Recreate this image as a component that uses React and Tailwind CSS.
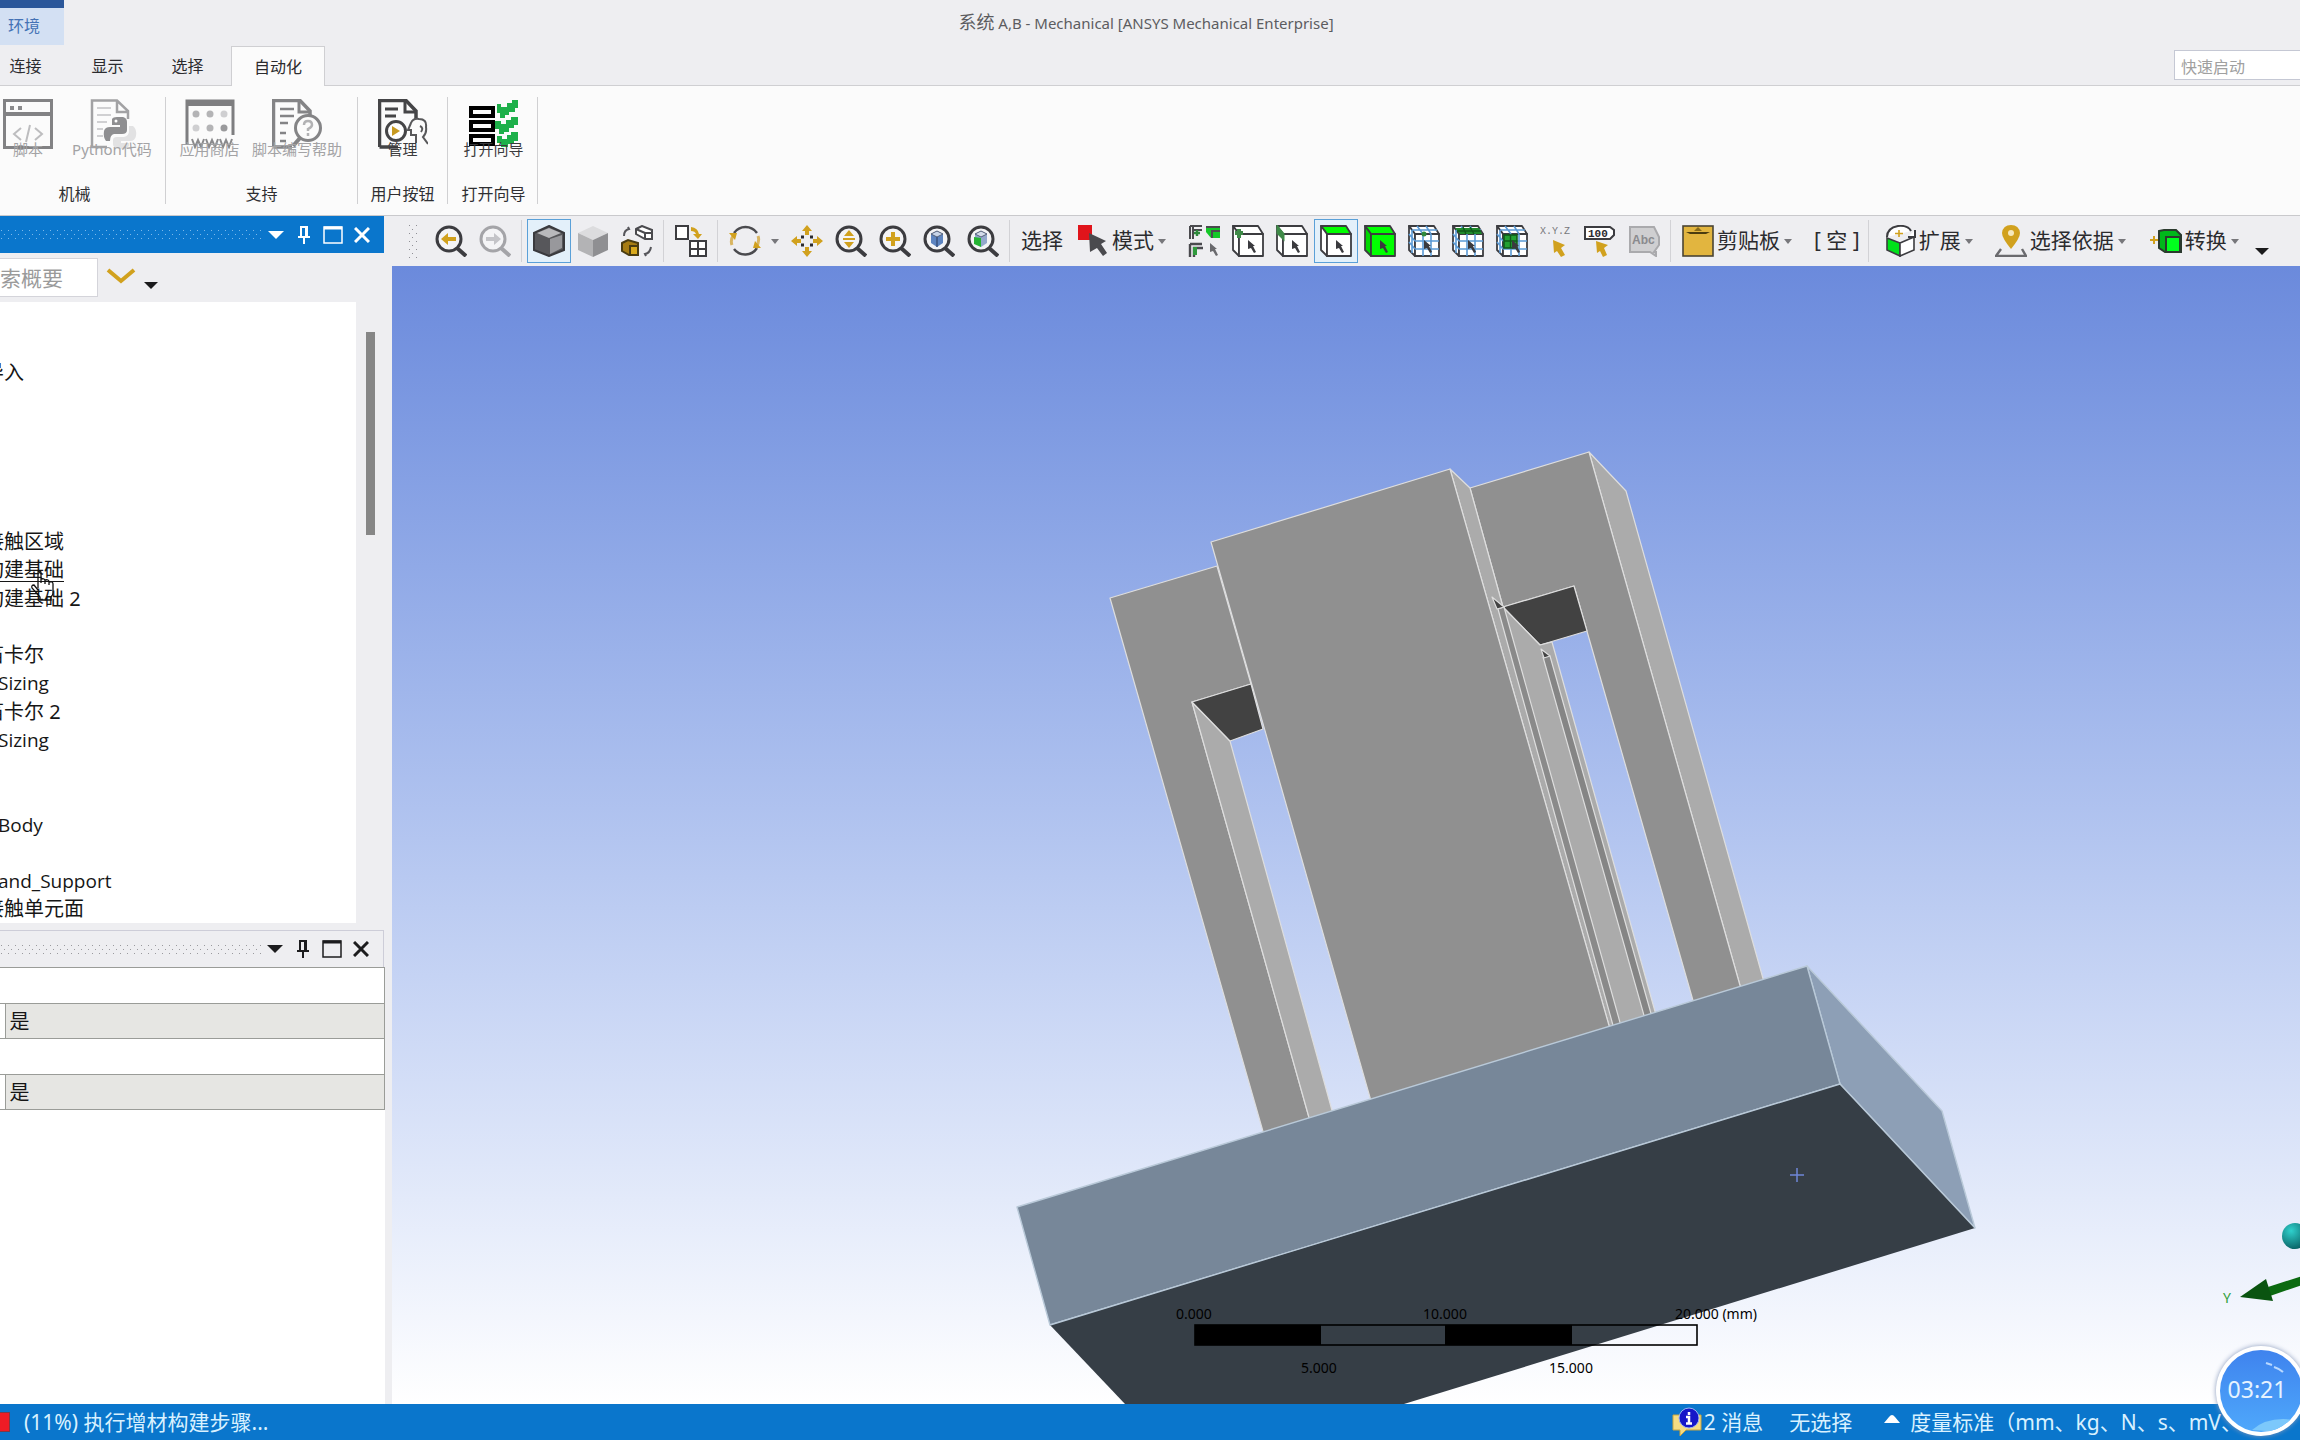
const treeRows = [
  "", "", "导入", "", "", "", "", "", "接触区域", "构建基础", "构建基础 2", "",
  "笛卡尔", "Sizing", "笛卡尔 2", "Sizing", "", "", "Body", "", "and_Support", "接触单元面",
];

const isLatin = (text) => /^[A-Za-z]/.test(text);

/* ---------- small shared pieces ---------- */

function Caret({ className = "" }) {
  return (
    <svg viewBox="0 0 8 5" className={`w-2 h-[5px] shrink-0 ${className}`} aria-hidden="true">
      <path d="M0 0H8L4 5Z" fill="#77777b" />
    </svg>
  );
}

function Separator() {
  return <div className="w-0.5 h-[42px] mx-1 shrink-0 border-l border-[#d2d2d6]" />;
}

function Dots({ id, color, className }) {
  return (
    <svg className={className} aria-hidden="true">
      <defs>
        <pattern id={id} width="7" height="8" patternUnits="userSpaceOnUse">
          <rect x="1" y="0" width="1" height="1" fill={color} />
          <rect x="4" y="4" width="1" height="1" fill={color} />
        </pattern>
      </defs>
      <rect width="100%" height="100%" fill={`url(#${id})`} />
    </svg>
  );
}

function ToolButton({ label, active, children }) {
  return (
    <button
      aria-label={label}
      className={`w-11 h-11 shrink-0 flex items-center justify-center border ${
        active ? "border-[#5aa0d8] bg-[#e3f0fa]" : "border-transparent"
      }`}
    >
      <svg viewBox="0 0 32 32" className="w-8 h-8" fill="none">
        {children}
      </svg>
    </button>
  );
}

function PanelButtons({ color }) {
  return (
    <div className="flex items-center pr-2">
      <button aria-label="菜单" className="w-7 h-7 flex items-center justify-center">
        <svg viewBox="0 0 16 8" className="w-4 h-2"><path d="M0 0H16L8 8Z" fill={color} /></svg>
      </button>
      <button aria-label="固定" className="w-7 h-7 flex items-center justify-center">
        <svg viewBox="0 0 16 20" className="w-4 h-5" fill="none" stroke={color} strokeWidth="2">
          <path d="M5 12V2H11V12M2 12H14M8 12V19" />
          <path d="M10 2V12" />
        </svg>
      </button>
      <button aria-label="最大化" className="w-[30px] h-7 flex items-center justify-center">
        <svg viewBox="0 0 20 18" className="w-5 h-[18px]" fill="none" stroke={color}>
          <rect x="1" y="1" width="18" height="16" strokeWidth="1.5" />
          <path d="M1 2H19" strokeWidth="3" />
        </svg>
      </button>
      <button aria-label="关闭" className="w-7 h-7 flex items-center justify-center">
        <svg viewBox="0 0 16 16" className="w-4 h-4" stroke={color} strokeWidth="3">
          <path d="M1 1L15 15M15 1L1 15" />
        </svg>
      </button>
    </div>
  );
}

/* ---------- toolbar icons ---------- */

function Magnifier({ color = "#3c3c40", children }) {
  return (
    <>
      <circle cx="14" cy="14" r="12" fill="#f4f4f6" stroke={color} strokeWidth="3" />
      <path d="M22 23L31 31" stroke={color} strokeWidth="4" />
      {children}
    </>
  );
}

function Cursor({ x = 14, y = 14, fill = "#3a3a3e" }) {
  return (
    <path
      transform={`translate(${x} ${y})`}
      d="M0 0L7 6H5L8 12L6 13L3 8L0 9Z"
      fill={fill}
    />
  );
}

function SelectBox({ top = "#fff", side = "#fff", front = "#fff", stroke = "#3c3c40", children }) {
  return (
    <>
      <g stroke={stroke} strokeWidth="1.8" strokeLinejoin="round">
        <path d="M1 1H26L31 9H7Z" fill={top} />
        <path d="M1 1L7 9V31L1 25Z" fill={side} />
        <rect x="7" y="9" width="24" height="22" fill={front} />
      </g>
      {children}
      <Cursor x={16} y={15} />
    </>
  );
}

function MeshLines() {
  return (
    <path
      d="M15 9V31M23 9V31M7 16H31M7 24H31M4 5H29M9 1L15 9M18 1L23 9M4 5V28M1 9L7 16M1 17L7 24"
      stroke="#5b9ad5"
      strokeWidth="1.6"
    />
  );
}

/* ---------- title, tabs, ribbon ---------- */

function TitleBar() {
  return (
    <header className="relative h-[46px] flex items-center justify-center pr-2">
      <div className="absolute left-0 top-0 w-16 h-[45px] border-t-8 border-[#2b579a] bg-[#d3e0f3] text-[#4472b5] text-base leading-9 pl-2">
        环境
      </div>
      <h1 className="text-[#5c5c60] text-[15px]">
        <span className="text-lg leading-none">系统</span> A,B - Mechanical [ANSYS Mechanical Enterprise]
      </h1>
    </header>
  );
}

function TabRow() {
  return (
    <nav className="h-10 flex items-stretch border-b border-[#cfcfd2] text-base text-[#2b2b2e]">
      <button className="w-[67px] pr-4 text-center">连接</button>
      <button className="w-[81px]">显示</button>
      <button className="w-[83px] pr-1">选择</button>
      <button className="w-[94px] -mb-px bg-[#fbfbfb] border border-b-0 border-[#cfcfd2]">自动化</button>
      <input
        aria-label="快速启动"
        placeholder="快速启动"
        className="ml-auto -mr-1 mt-1 w-[130px] h-[30px] px-1.5 pt-1 bg-white border border-[#c5c8d4] text-base placeholder:text-[#a0a0a0]"
      />
    </nav>
  );
}

function RibbonButton({ label, wide, disabled, children }) {
  return (
    <button
      disabled={disabled}
      className={`flex flex-col items-center ${wide} ${disabled ? "text-[#a3a3a5]" : "text-[#3a3a3c]"}`}
    >
      <svg viewBox="0 0 50 50" className="w-[50px] h-[50px]" fill="none">
        {children}
      </svg>
      <span className="relative -mt-2 text-[15px] leading-4 whitespace-nowrap">{label}</span>
    </button>
  );
}

function RibbonGroup({ title, className, rowClass = "justify-center", children }) {
  return (
    <section className={`my-[11px] border-r border-[#d0d0d2] flex flex-col justify-between ${className}`}>
      <div className={`flex pt-0.5 ${rowClass}`}>{children}</div>
      <h2 className="text-center text-base leading-5 text-[#2f2f32]">{title}</h2>
    </section>
  );
}

function PageShape({ color }) {
  return (
    <>
      <path d="M1.500 48V1.500H28L38 12V20M1.500 48H20" stroke={color} strokeWidth="3.5" />
      <path d="M27 2V13H38" stroke={color} strokeWidth="3" />
    </>
  );
}

function Ribbon() {
  return (
    <div className="h-[130px] flex bg-[#fbfbfb] border-b border-[#c9c9cc]">
      <RibbonGroup title="机械" className="-ml-4 w-[182px]" rowClass="pl-0.5">
        <RibbonButton label="脚本" wide="w-[84px]" disabled>
          <rect x="1.500" y="1.500" width="47" height="47" stroke="#828284" strokeWidth="3" />
          <path d="M1 15H49" stroke="#828284" strokeWidth="4" />
          <path d="M7 9H11M15 9H19" stroke="#8a8a8c" strokeWidth="4" />
          <path d="M18 29L11 35L18 41M32 29L39 35L32 41M27 26L23 43" stroke="#bdbdbf" strokeWidth="2" />
        </RibbonButton>
        <RibbonButton label="Python代码" wide="w-[84px]" disabled>
          <path d="M5 48V1.500H30L41 12V20M30 2V13H41M5 48H20" stroke="#a2a2a4" strokeWidth="2.500" />
          <path d="M10 9H24M10 16H24M10 23H20M10 30H16M10 37H16" stroke="#d0d0d2" strokeWidth="2" />
          <path d="M25 20Q26 18 30 18H36Q40 19 40 23V31Q40 35 35 35H27Q23 36 23 42H19Q16 38 17 32Q18 28 23 28H33V26H25Z" fill="#8f8f91" />
          <path d="M42 27H46Q50 30 49 37Q48 42 43 42H34V44H42V47Q40 50 33 50Q26 50 26 45V41Q26 38 30 38H37Q42 37 42 32Z" fill="#e2e2e3" />
          <circle cx="29" cy="22" r="1.500" fill="#fff" />
        </RibbonButton>
      </RibbonGroup>

      <RibbonGroup title="支持" className="w-[192px]" rowClass="justify-center pr-4">
        <RibbonButton label="应用商店" wide="w-[88px]" disabled>
          <path d="M2 46V2H48V36" stroke="#7e7e80" strokeWidth="3" />
          <path d="M1 4H49" stroke="#7e7e80" strokeWidth="6" />
          <g fill="#b4b4b6">
            <circle cx="11" cy="15" r="3.500" /><circle cx="25" cy="15" r="3.500" /><circle cx="39" cy="15" r="3.500" fill="#cfcfd1" />
            <circle cx="11" cy="29" r="3.500" fill="#cfcfd1" /><circle cx="25" cy="29" r="3.500" /><circle cx="39" cy="29" r="3.500" fill="#9a9a9c" />
          </g>
          <path d="M7 40L10 48L13 41L16 48L19 40M21 40L24 48L27 41L30 48L33 40M35 40L38 48L41 41L44 48L47 40" stroke="#8a8a8c" strokeWidth="2" />
        </RibbonButton>
        <RibbonButton label="脚本编写帮助" wide="w-[88px]" disabled>
          <PageShape color="#848486" />
          <path d="M8 10H22M8 17H22M8 24H16M8 34H14M8 42H14" stroke="#848486" strokeWidth="2.500" />
          <circle cx="36" cy="29" r="12.500" fill="#fbfbfb" stroke="#848486" strokeWidth="3" />
          <path d="M32 26Q32 22 36 22Q40 22 40 26Q40 28 36 30V32M36 34V37" stroke="#b2b2b4" strokeWidth="2.500" />
          <path d="M28 39L21 47" stroke="#848486" strokeWidth="4" />
        </RibbonButton>
      </RibbonGroup>

      <RibbonGroup title="用户按钮" className="w-[90px]">
        <RibbonButton label="管理" wide="w-20">
          <PageShape color="#454547" />
          <path d="M7 10H20M7 17H18" stroke="#454547" strokeWidth="3" />
          <circle cx="18" cy="32" r="9.500" fill="#fff" stroke="#454547" strokeWidth="3" />
          <path d="M14 27L22 32L14 37Z" fill="#c89a20" />
          <path d="M33 24Q35 19 41 20Q49 20 48 28Q49 34 45 38L50 45M33 24L30 31H33V36H38V44" stroke="#58585a" strokeWidth="2" />
          <path d="M42 27Q46 29 43 33" stroke="#58585a" strokeWidth="2" />
        </RibbonButton>
      </RibbonGroup>

      <RibbonGroup title="打开向导" className="w-[90px] pl-0.5">
        <RibbonButton label="打开向导" wide="w-20">
          <g stroke="#000" strokeWidth="4">
            <rect x="2" y="9" width="22" height="8" />
            <rect x="2" y="23" width="22" height="8" />
            <rect x="2" y="37" width="22" height="8" />
          </g>
          <g fill="#1eb04a">
            <path d="M28 5H32V8H38V4H43V1H49V9H46V13H40V16H36V19H31V14H28Z" />
            <path d="M26 22H32V25H37V21H42V18H49V26H45V29H40V33H35V35H30V30H26Z" />
            <path d="M28 37H33V40H38V36H42V33H49V42H45V45H39V48H32V44H28Z" />
          </g>
        </RibbonButton>
      </RibbonGroup>
    </div>
  );
}

/* ---------- left column ---------- */

function OutlinePanel() {
  return (
    <>
      <div className="h-[37px] mr-2 bg-[#0a76cc] flex items-center shrink-0">
        <Dots id="dots-outline" color="#7db9ea" className="flex-1 h-[9px]" />
        <PanelButtons color="#ffffff" />
      </div>
      <div className="h-[49px] flex items-center shrink-0">
        <input
          aria-label="搜索概要"
          placeholder="搜索概要"
          className="w-[120px] -ml-[22px] h-[39px] bg-white border border-[#d4d4da] text-[21px] placeholder:text-[#9a9a9a]"
        />
        <button aria-label="展开" className="ml-2 mb-1">
          <svg viewBox="0 0 30 16" className="w-[30px] h-4" fill="none">
            <path d="M2 2L15 13L28 2" stroke="#d1a11e" strokeWidth="4" />
          </svg>
        </button>
        <button aria-label="更多" className="ml-2 mt-4">
          <svg viewBox="0 0 14 7" className="w-3.5 h-[7px]"><path d="M0 0H14L7 7Z" fill="#1a1a1c" /></svg>
        </button>
      </div>
      <div className="flex-[622] min-h-0 flex overflow-hidden relative">
        <ul className="flex-1 bg-white flex flex-col text-[#161616] leading-7 overflow-hidden">
          {treeRows.map((row, i) => (
            <li key={i} className="flex-1 min-h-0 flex items-center whitespace-nowrap">
              <span
                className={`${
                  isLatin(row) ? "-ml-0.5 text-[19px] font-['Open_Sans',sans-serif]" : "-ml-4 text-xl"
                } ${i === 9 ? "underline underline-offset-4 decoration-1" : ""}`}
              >
                {row}
              </span>
            </li>
          ))}
        </ul>
        <div className="w-9 pl-2.5 flex flex-col">
          <div className="flex-[30]" />
          <div className="flex-[203] w-[9px] bg-[#868686]" />
          <div className="flex-[389]" />
        </div>
        {/* hand pointer over the tree */}
        <svg viewBox="0 0 26 32" className="absolute left-[30px] top-[268px] w-[26px] h-8" fill="none" stroke="#111" strokeWidth="1.3">
          <path d="M8 18V3Q8 1 10 1Q11 1 11 3V13V9Q15 8 15 11V14V10Q19 9 19 12V15V12Q23 11 23 14V23Q23 25 21 27V30H10V27L2 18Q1 15 4 15L8 20" />
        </svg>
      </div>
    </>
  );
}

function DetailsPanel() {
  const cells = ["", "是", "", "是"];
  return (
    <>
      <div className="h-[37px] mt-[7px] mr-2 border border-l-0 border-b-0 border-[#cdcdd8] flex items-center shrink-0">
        <Dots id="dots-details" color="#9a9a9e" className="flex-1 h-[9px]" />
        <PanelButtons color="#1c1c1e" />
      </div>
      <div className="flex-[437] min-h-0 mr-[7px] bg-white">
        <table className="w-full border-collapse text-xl leading-6 text-[#161616]">
          <tbody>
            {cells.map((value, i) =>
              value ? (
                <tr key={i} className="h-[35px] border border-l-0 border-[#9a9c98]">
                  <td className="w-[5px] p-0 border-r border-[#9a9c98]" />
                  <td className="p-0 pl-1 pt-0.5 bg-[#e6e6e3]">{value}</td>
                </tr>
              ) : (
                <tr key={i} className="h-9 border border-l-0 border-[#9a9c98]">
                  <td colSpan={2} className="p-0" />
                </tr>
              )
            )}
          </tbody>
        </table>
      </div>
    </>
  );
}

/* ---------- graphics toolbar ---------- */

function TextButton({ label, children, caret = true, className = "" }) {
  return (
    <button className={`flex items-center h-11 shrink-0 text-[21px] text-[#2b2b2e] whitespace-nowrap ${className}`}>
      {children && (
        <svg viewBox="0 0 32 32" className="w-8 h-8 mr-[3px]" fill="none">
          {children}
        </svg>
      )}
      {label}
      {caret && <Caret className="ml-1" />}
    </button>
  );
}

function GraphicsToolbar() {
  return (
    <div className="h-[50px] flex items-center pl-4 bg-[#eeeef1] shrink-0 overflow-hidden">
      <Dots id="dots-grip" color="#8f8f95" className="w-[9px] h-[33px] mr-3 shrink-0" />

      <ToolButton label="上一视图">
        <Magnifier><path d="M6 14L13 8V12H21V16H13V20Z" fill="#d1a11e" /></Magnifier>
      </ToolButton>
      <ToolButton label="下一视图">
        <Magnifier color="#a4a4a8"><path d="M22 14L15 8V12H7V16H15V20Z" fill="#c4c4c8" /></Magnifier>
      </ToolButton>
      <Separator />

      <ToolButton label="着色外表面和边" active>
        <path d="M16 1L31 8V25L16 31L1 25V8Z" fill="#57575b" stroke="#3a3a3e" strokeWidth="2" />
        <path d="M16 3L28 8L16 13L4 8Z" fill="#b9b9bc" />
        <path d="M17 14L29 10V23L17 29Z" fill="#98989c" />
      </ToolButton>
      <ToolButton label="着色外表面">
        <path d="M16 1L31 8L16 15L1 8Z" fill="#dcdcde" />
        <path d="M1 8L16 15V32L1 25Z" fill="#b3b3b5" />
        <path d="M31 8L16 15V32L31 25Z" fill="#8f8f92" />
      </ToolButton>
      <ToolButton label="显示切换">
        <path d="M15 4L21 1L31 5V14H24L15 9Z" fill="#fff" stroke="#4a4a4e" strokeWidth="2" />
        <path d="M15 4L24 8V14M24 8H31" stroke="#4a4a4e" strokeWidth="2" />
        <path d="M1 18L7 15L17 18V30H8L1 26Z" fill="#a67c12" stroke="#4a3c10" strokeWidth="2" />
        <rect x="9" y="21" width="8" height="9" fill="#d9a91c" stroke="#4a3c10" strokeWidth="2" />
        <path d="M3 11Q3 5 8 4L7 2M30 22Q29 28 24 29L25 31" stroke="#55555a" strokeWidth="2" />
      </ToolButton>
      <Separator />

      <ToolButton label="视口">
        <rect x="1" y="1" width="12" height="13" fill="#fff" stroke="#3c3c40" strokeWidth="2" />
        <rect x="15" y="16" width="16" height="15" fill="#fff" stroke="#3c3c40" strokeWidth="2" />
        <path d="M23 16V31M15 24H31" stroke="#3c3c40" strokeWidth="2" />
        <path d="M16 2Q23 3 24 9H27L23 14L18 9H21Q20 6 16 6Z" fill="#d1a11e" />
      </ToolButton>
      <Separator />

      <ToolButton label="旋转">
        <path d="M5 8A14 14 0 0 1 28 8M28 23A14 14 0 0 1 5 24" stroke="#4a4a4e" strokeWidth="2.400" />
        <path d="M3 20Q1 15 5 9M29 11Q31 16 27 23" stroke="#d9b561" strokeWidth="3" />
        <path d="M0 8H8L6 15Z" fill="#d1a11e" />
        <path d="M32 23H24L26 16Z" fill="#d1a11e" />
      </ToolButton>
      <Caret className="ml-1 mr-1.5" />
      <ToolButton label="平移">
        <g fill="#d1a11e">
          <path d="M16 0L21 6H18V10H14V6H11Z" />
          <path d="M16 32L21 26H18V22H14V26H11Z" />
          <path d="M0 16L6 11V14H10V18H6V21Z" />
          <path d="M32 16L26 11V14H22V18H26V21Z" />
        </g>
        <path d="M10 12H13M19 12H22M10 20H13M19 20H22" stroke="#2a2a2e" strokeWidth="3" />
      </ToolButton>
      <ToolButton label="缩放">
        <Magnifier>
          <path d="M14 5L19 11H9ZM14 23L19 17H9Z" fill="#d1a11e" />
          <path d="M8 14H20" stroke="#d1a11e" strokeWidth="2" />
        </Magnifier>
      </ToolButton>
      <ToolButton label="框选缩放">
        <Magnifier><path d="M14 7V21M7 14H21" stroke="#d1a11e" strokeWidth="4" /></Magnifier>
      </ToolButton>
      <ToolButton label="缩放到适合">
        <Magnifier>
          <path d="M14 6L20 9V18L14 22L8 18V9Z" fill="#5d84c0" />
          <path d="M14 6L20 9L14 12L8 9Z" fill="#c8d4e8" stroke="#55617a" />
          <path d="M14 12V22" stroke="#39507c" strokeWidth="1.500" />
        </Magnifier>
      </ToolButton>
      <ToolButton label="缩放到选择">
        <Magnifier>
          <path d="M14 6L20 9V18L14 22L8 18V9Z" fill="#93a8cc" />
          <path d="M7 12L14 13V22L7 19Z" fill="#26b434" />
          <path d="M14 6L20 9L14 12L8 9Z" fill="#d4dcea" stroke="#55617a" />
        </Magnifier>
      </ToolButton>
      <Separator />

      <TextButton label="选择" caret={false} className="ml-1.5 mr-3.5" />
      <TextButton label="模式" className="mr-4">
        <rect x="1" y="0" width="14" height="15" fill="#e0141b" />
        <path d="M12 8L29 16L24 19L30 28L26 31L20 23L13 27Z" fill="#4a4a4e" />
      </TextButton>

      <ToolButton label="选择模式">
        <path d="M2 1H14M5 1V14M2 1V14M14 5H6" stroke="#4a4a4e" strokeWidth="2" />
        <path d="M9 5V11M6 8H12" stroke="#2f8a3c" strokeWidth="2.400" />
        <path d="M18 2H32V13H23L18 7Z" fill="#14c828" />
        <path d="M18 2H32M24 13V6H32" stroke="#4a4a4e" strokeWidth="2" />
        <path d="M2 19H14M2 19V32M6 32V23H15" stroke="#4a4a4e" strokeWidth="2.400" />
        <path d="M5 22L9 22V30H5Z" fill="#2f9a3c" />
        <Cursor x={22} y={18} fill="#6a6a6e" />
      </ToolButton>
      <ToolButton label="顶点">
        <SelectBox><path d="M7 4V13M3 8H11" stroke="#3f8a48" strokeWidth="4" /></SelectBox>
      </ToolButton>
      <ToolButton label="边">
        <SelectBox><path d="M2 3L7 9V13L2 8Z" fill="#1f9a35" stroke="#3f8a48" strokeWidth="3" /></SelectBox>
      </ToolButton>
      <ToolButton label="面" active>
        <SelectBox top="#00ff00" />
      </ToolButton>
      <ToolButton label="体">
        <SelectBox top="#00ff00" side="#00d800" front="#00ff00" />
      </ToolButton>
      <ToolButton label="节点">
        <SelectBox><MeshLines /><circle cx="16" cy="9" r="2.500" fill="#2f8a3c" /></SelectBox>
      </ToolButton>
      <ToolButton label="单元面">
        <SelectBox>
          <MeshLines />
          <path d="M3 3H27L30 9H8Z" fill="#1f8a2c" />
          <path d="M11 2L14 9M18 2L22 9M5 6H29" stroke="#0f5a1a" strokeWidth="1.400" />
        </SelectBox>
      </ToolButton>
      <ToolButton label="单元">
        <SelectBox>
          <MeshLines />
          <rect x="8" y="10" width="13" height="13" fill="#22a032" stroke="#0f5a1a" strokeWidth="1.600" />
          <path d="M14.500 10V23M8 16H21" stroke="#0f5a1a" strokeWidth="1.400" />
        </SelectBox>
      </ToolButton>
      <ToolButton label="坐标">
        <text x="0" y="9" fontSize="10" fill="#77777b" fontFamily="Liberation Mono">X.Y.Z</text>
        <path d="M13 15L25 20L21 23L25 30L21 32L17 26L14 28Z" fill="#d1a11e" />
      </ToolButton>
      <ToolButton label="探针">
        <path d="M1 2H26L30 5V10L26 14H1Z" fill="#fff" stroke="#3c3c40" strokeWidth="2" />
        <text x="4" y="12" fontSize="11" fontWeight="bold" fill="#2a2a2e" fontFamily="Liberation Mono">100</text>
        <path d="M12 16L24 20L20 23L23 30L19 32L16 26L13 28Z" fill="#d1a11e" />
      </ToolButton>
      <ToolButton label="标注">
        <path d="M2 2H26L31 12V20L26 27H28V31L22 27H2Z" fill="#cfcfd1" stroke="#aaaaad" strokeWidth="2" />
        <text x="4" y="19" fontSize="12" fontWeight="bold" fill="#8a8a8e" fontFamily="Liberation Sans">Abc</text>
      </ToolButton>
      <Separator />

      <TextButton label="剪贴板" className="ml-1.5 mr-[22px]">
        <rect x="1" y="1" width="30" height="30" fill="#e2b53f" stroke="#4a4434" strokeWidth="1.600" />
        <path d="M4 7H28L24 9H8Z" fill="#4a3c10" />
        <path d="M12 6L16 2L20 6Z" fill="#8a6c1a" />
      </TextButton>
      <TextButton label="[ 空 ]" caret={false} className="mr-1" />
      <Separator />

      <TextButton label="扩展" className="ml-2.5 mr-[22px]">
        <path d="M3 13L16 18V31L3 25Z" fill="#00e21a" stroke="#3c3c40" strokeWidth="1.600" />
        <path d="M16 18L30 12V25L16 31Z" fill="#fff" stroke="#3c3c40" strokeWidth="1.600" />
        <path d="M3 12Q3 3 14 1Q24 0 27 6M31 5V12H24" fill="#fff" stroke="#3c3c40" strokeWidth="2" />
        <path d="M15 5V12M11 8.500H19" stroke="#d1a11e" strokeWidth="1.600" />
      </TextButton>
      <TextButton label="选择依据" className="mr-6">
        <path d="M16 24Q7 13 7 8Q8 0 16 0Q24 0 25 8Q25 13 16 24Z" fill="#d1a11e" />
        <circle cx="16" cy="8" r="3" fill="#f6e8bc" />
        <path d="M6 24L1 31H31L27 24" stroke="#6a6a6e" strokeWidth="2.400" />
      </TextButton>
      <TextButton label="转换">
        <path d="M0 15H8M4 11V19" stroke="#d1a11e" strokeWidth="2" />
        <path d="M9 6L14 5H26L31 10V27H15L9 23Z" fill="#00b81a" stroke="#2b3a2e" strokeWidth="2" />
        <rect x="16" y="12" width="14" height="15" fill="#00ff1e" stroke="#2b3a2e" strokeWidth="2" />
      </TextButton>
      <button aria-label="更多工具" className="ml-4 mt-5">
        <svg viewBox="0 0 14 7" className="w-3.5 h-[7px]"><path d="M0 0H14L7 7Z" fill="#1a1a1c" /></svg>
      </button>
    </div>
  );
}

/* ---------- 3D viewport ---------- */

function Viewport() {
  return (
    <div className="flex-1 min-h-0 bg-linear-to-b from-[#6b8adc] to-white">
      <svg viewBox="392 266 1908 1138" preserveAspectRatio="xMidYMid slice" className="block w-full h-full">
        <defs>
          <radialGradient id="ball" cx="0.350" cy="0.300" r="0.800">
            <stop offset="0" stopColor="#2fd0cc" />
            <stop offset="1" stopColor="#07595c" />
          </radialGradient>
        </defs>

        {/* uprights, their feet run a little behind the plate */}
        <g stroke="#dedede" strokeWidth="1.200" strokeLinejoin="round">
          <path d="M1110 598L1217 566L1251 684L1192 702L1310 1121L1264 1135Z" fill="#909090" />
          <path d="M1192 702L1230 741L1333 1114L1310 1121Z" fill="#ababab" />
          <path d="M1192 702L1251 684L1263 729L1230 741Z" fill="#424242" />
          <path d="M1589 452L1626 491L1764 982L1741 989Z" fill="#ababab" />
          <path d="M1470 488L1589 452L1741 989L1694 1004L1574 586L1503 607Z" fill="#909090" />
          <path d="M1503 607L1574 586L1587 631L1540 645Z" fill="#424242" />
          <path d="M1450 469L1470 488L1503 607L1540 645L1552 642L1656 1015L1610 1029Z" fill="#ababab" />
          <path d="M1498 609L1504 607L1621 1026L1614 1029Z" fill="#8a8a8a" />
          <path d="M1543 657L1550 656L1652 1017L1645 1019Z" fill="#858585" />
          <path d="M1492 597L1504 607L1497 609Z" fill="#424242" />
          <path d="M1541 649L1550 656L1544 658Z" fill="#424242" />
          <path d="M1211 542L1450 469L1610 1029L1371 1101Z" fill="#909090" />
        </g>

        {/* base plate */}
        <g stroke="#b9c9d8" strokeWidth="1.400" strokeLinejoin="round">
          <path d="M1807 966L1942 1111L1975 1228L1840 1084Z" fill="#8d9fb6" />
          <path d="M1017 1207L1807 966L1840 1084L1050 1325Z" fill="#778799" />
        </g>
        <path d="M1050 1325L1840 1084L1975 1228L1404 1404H1125Z" fill="#363e46" />
        <path d="M1050 1325L1840 1084L1975 1228" fill="none" stroke="#b9c9d8" strokeWidth="1.400" />
        <path d="M1790 1175H1804M1797 1168V1182" stroke="#6f86d8" strokeWidth="1.500" />

        {/* scale ruler */}
        <rect x="1195" y="1325" width="502" height="20" fill="none" stroke="#000" strokeWidth="1.600" />
        <path d="M1195 1325H1321V1345H1195ZM1445 1325H1572V1345H1445Z" fill="#000" />
        <g fontSize="14" fill="#000" textAnchor="middle">
          <text x="1194" y="1319">0.000</text>
          <text x="1445" y="1319">10.000</text>
          <text x="1716" y="1319">20.000 (mm)</text>
          <text x="1319" y="1373">5.000</text>
          <text x="1571" y="1373">15.000</text>
        </g>

        {/* axis triad */}
        <circle cx="2295" cy="1236" r="13" fill="url(#ball)" />
        <path d="M2268 1287L2302 1276V1285L2270 1296Z" fill="#0b6a10" />
        <path d="M2240 1297L2266 1279L2273 1301Z" fill="#0a5410" />
        <text x="2223" y="1303" fontSize="14" fill="#2fa03a">Y</text>
      </svg>
    </div>
  );
}

/* ---------- status bar ---------- */

function StatusBar() {
  return (
    <footer className="h-9 shrink-0 flex items-center bg-[#0a76cc] text-[21px] leading-8 text-[#d9f1ff] whitespace-nowrap">
      <button aria-label="停止" className="w-2.5 h-5 bg-[#ee1c25] border border-l-0 border-[#7a3a4a]" />
      <span className="ml-3.5">(11%) 执行增材构建步骤...</span>
      <button className="ml-auto flex items-center">
        <svg viewBox="0 0 30 30" className="w-[30px] h-[30px] mr-0.5" fill="none">
          <path d="M1 8H29V23H14L8 29V23H1Z" fill="#f6dc83" stroke="#c9a53e" />
          <circle cx="17" cy="11" r="10" fill="#1616c8" stroke="#9ab4f0" />
          <path d="M17 5V8M14 10H17V16M14 16.500H20" stroke="#fff" strokeWidth="2.500" />
        </svg>
        2 消息
      </button>
      <span className="ml-[26px]">无选择</span>
      <button className="ml-8 flex items-center mr-1">
        <svg viewBox="0 0 16 8" className="w-4 h-2 mr-2.5 mb-1.5"><path d="M0 8L5 2Q8 -2 11 2L16 8Z" fill="#fff" /></svg>
        度量标准（mm、kg、N、s、mV、mA）
      </button>
    </footer>
  );
}

function RecordTimer() {
  return (
    <div className="absolute -right-1.5 bottom-1 w-[90px] h-[90px] rounded-full bg-white shadow-[0_0_5px_#8899bb] p-1">
      <div className="relative w-full h-full rounded-full overflow-hidden bg-linear-to-b from-[#3f83ee] to-[#4fa8fb] flex items-center justify-center">
        <svg viewBox="0 0 82 82" className="absolute inset-0 w-full h-full" fill="none">
          <path d="M32 80Q48 66 74 70L60 82Z" fill="#7cc8fb" />
          <path d="M46 13L52 15M54 17Q60 19 63 22" stroke="#b8d8ff" strokeWidth="2" />
        </svg>
        <span className="relative text-[23px] leading-none text-[#e6f3ff] pr-2 pb-1">03:21</span>
      </div>
    </div>
  );
}

export default function App() {
  return (
    <div className="relative h-screen flex flex-col overflow-hidden bg-[#eeeef1] font-['Noto_Sans','Noto_Sans_CJK_SC',sans-serif]">
      <TitleBar />
      <TabRow />
      <Ribbon />
      <main className="flex-1 min-h-0 flex">
        <aside className="w-[392px] shrink-0 flex flex-col">
          <OutlinePanel />
          <DetailsPanel />
        </aside>
        <div className="flex-1 min-w-0 flex flex-col">
          <GraphicsToolbar />
          <Viewport />
        </div>
      </main>
      <StatusBar />
      <RecordTimer />
    </div>
  );
}
